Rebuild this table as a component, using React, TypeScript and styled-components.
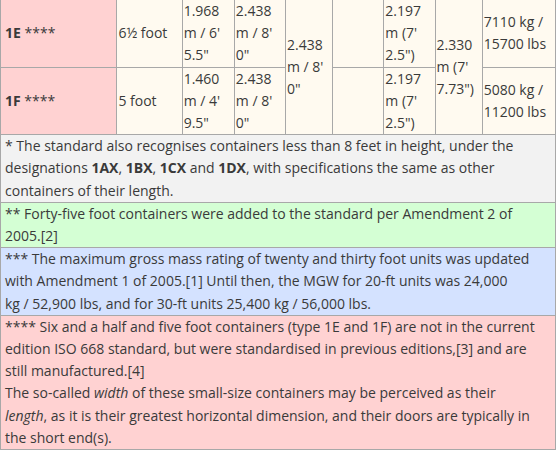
import styled, { createGlobalStyle } from "styled-components";

const GlobalStyle = createGlobalStyle`
  html, body {
    margin: 0;
    padding: 0;
    background: #ffffff;
  }
`;

const colors = {
  cream: "#fffaf0",
  pink: "#ffd2d2",
  grey: "#f2f2f2",
  green: "#d4ffd4",
  blue: "#d4e2ff",
  border: "#a8a8a8",
  text: "#3a3a3a",
};

const Table = styled.table`
  border-collapse: collapse;
  table-layout: fixed;
  width: 556px;
  margin-top: -1px;
  font-family: "Open Sans", "Noto Sans", sans-serif;
  font-size: 14px;
  line-height: 22.2px;
  color: ${colors.text};
`;

const Cell = styled.td<{ $bg?: string; $pad?: number }>`
  border: 1px solid ${colors.border};
  background: ${({ $bg }) => $bg ?? colors.cream};
  padding: 0 ${({ $pad }) => $pad ?? 1}px;
  vertical-align: middle;
  text-align: left;
  white-space: nowrap;
`;

const Note = styled.td<{ $bg: string }>`
  border: 1px solid ${colors.border};
  background: ${({ $bg }) => $bg};
  padding: 0 4px;
  vertical-align: top;
  white-space: nowrap;
`;

const Code = styled.b`
  font-weight: 700;
`;

const widths = [116, 65, 52, 51, 47, 51, 51, 47, 73];

function Lines({ items }: { items: string[] }) {
  return (
    <>
      {items.map((t, i) => (
        <span key={i}>
          {t}
          {i < items.length - 1 && <br />}
        </span>
      ))}
    </>
  );
}

export default function App() {
  return (
    <>
      <GlobalStyle />
      <Table>
        <colgroup>
          {widths.map((w, i) => (
            <col key={i} style={{ width: w }} />
          ))}
        </colgroup>
        <tbody>
          <tr>
            <Cell $bg={colors.pink} $pad={4}>
              <Code>1E</Code> ****
            </Cell>
            <Cell>6½ foot</Cell>
            <Cell>
              <Lines items={["1.968", "m / 6'", '5.5"']} />
            </Cell>
            <Cell>
              <Lines items={["2.438", "m / 8'", '0"']} />
            </Cell>
            <Cell rowSpan={2}>
              <Lines items={["2.438", "m / 8'", '0"']} />
            </Cell>
            <Cell />
            <Cell>
              <Lines items={["2.197", "m (7'", '2.5")']} />
            </Cell>
            <Cell rowSpan={2}>
              <Lines items={["2.330", "m (7'", '7.73")']} />
            </Cell>
            <Cell>
              <Lines items={["7110 kg /", "15700 lbs"]} />
            </Cell>
          </tr>
          <tr>
            <Cell $bg={colors.pink} $pad={4}>
              <Code>1F</Code> ****
            </Cell>
            <Cell>5 foot</Cell>
            <Cell>
              <Lines items={["1.460", "m / 4'", '9.5"']} />
            </Cell>
            <Cell>
              <Lines items={["2.438", "m / 8'", '0"']} />
            </Cell>
            <Cell />
            <Cell>
              <Lines items={["2.197", "m (7'", '2.5")']} />
            </Cell>
            <Cell>
              <Lines items={["5080 kg /", "11200 lbs"]} />
            </Cell>
          </tr>
          <tr>
            <Note colSpan={9} $bg={colors.grey}>
              * The standard also recognises containers less than 8 feet in height, under the
              <br />
              designations <Code>1AX</Code>, <Code>1BX</Code>, <Code>1CX</Code> and{" "}
              <Code>1DX</Code>, with specifications the same as other
              <br />
              containers of their length.
            </Note>
          </tr>
          <tr>
            <Note colSpan={9} $bg={colors.green}>
              ** Forty-five foot containers were added to the standard per Amendment 2 of
              <br />
              2005.[2]
            </Note>
          </tr>
          <tr>
            <Note colSpan={9} $bg={colors.blue}>
              *** The maximum gross mass rating of twenty and thirty foot units was updated
              <br />
              with Amendment 1 of 2005.[1] Until then, the MGW for 20-ft units was 24,000
              <br />
              kg / 52,900 lbs, and for 30-ft units 25,400 kg / 56,000 lbs.
            </Note>
          </tr>
          <tr>
            <Note colSpan={9} $bg={colors.pink}>
              **** Six and a half and five foot containers (type 1E and 1F) are not in the current
              <br />
              edition ISO 668 standard, but were standardised in previous editions,[3] and are
              <br />
              still manufactured.[4]
              <br />
              The so-called <i>width</i> of these small-size containers may be perceived as their
              <br />
              <i>length</i>, as it is their greatest horizontal dimension, and their doors are typically in
              <br />
              the short end(s).
            </Note>
          </tr>
        </tbody>
      </Table>
    </>
  );
}
